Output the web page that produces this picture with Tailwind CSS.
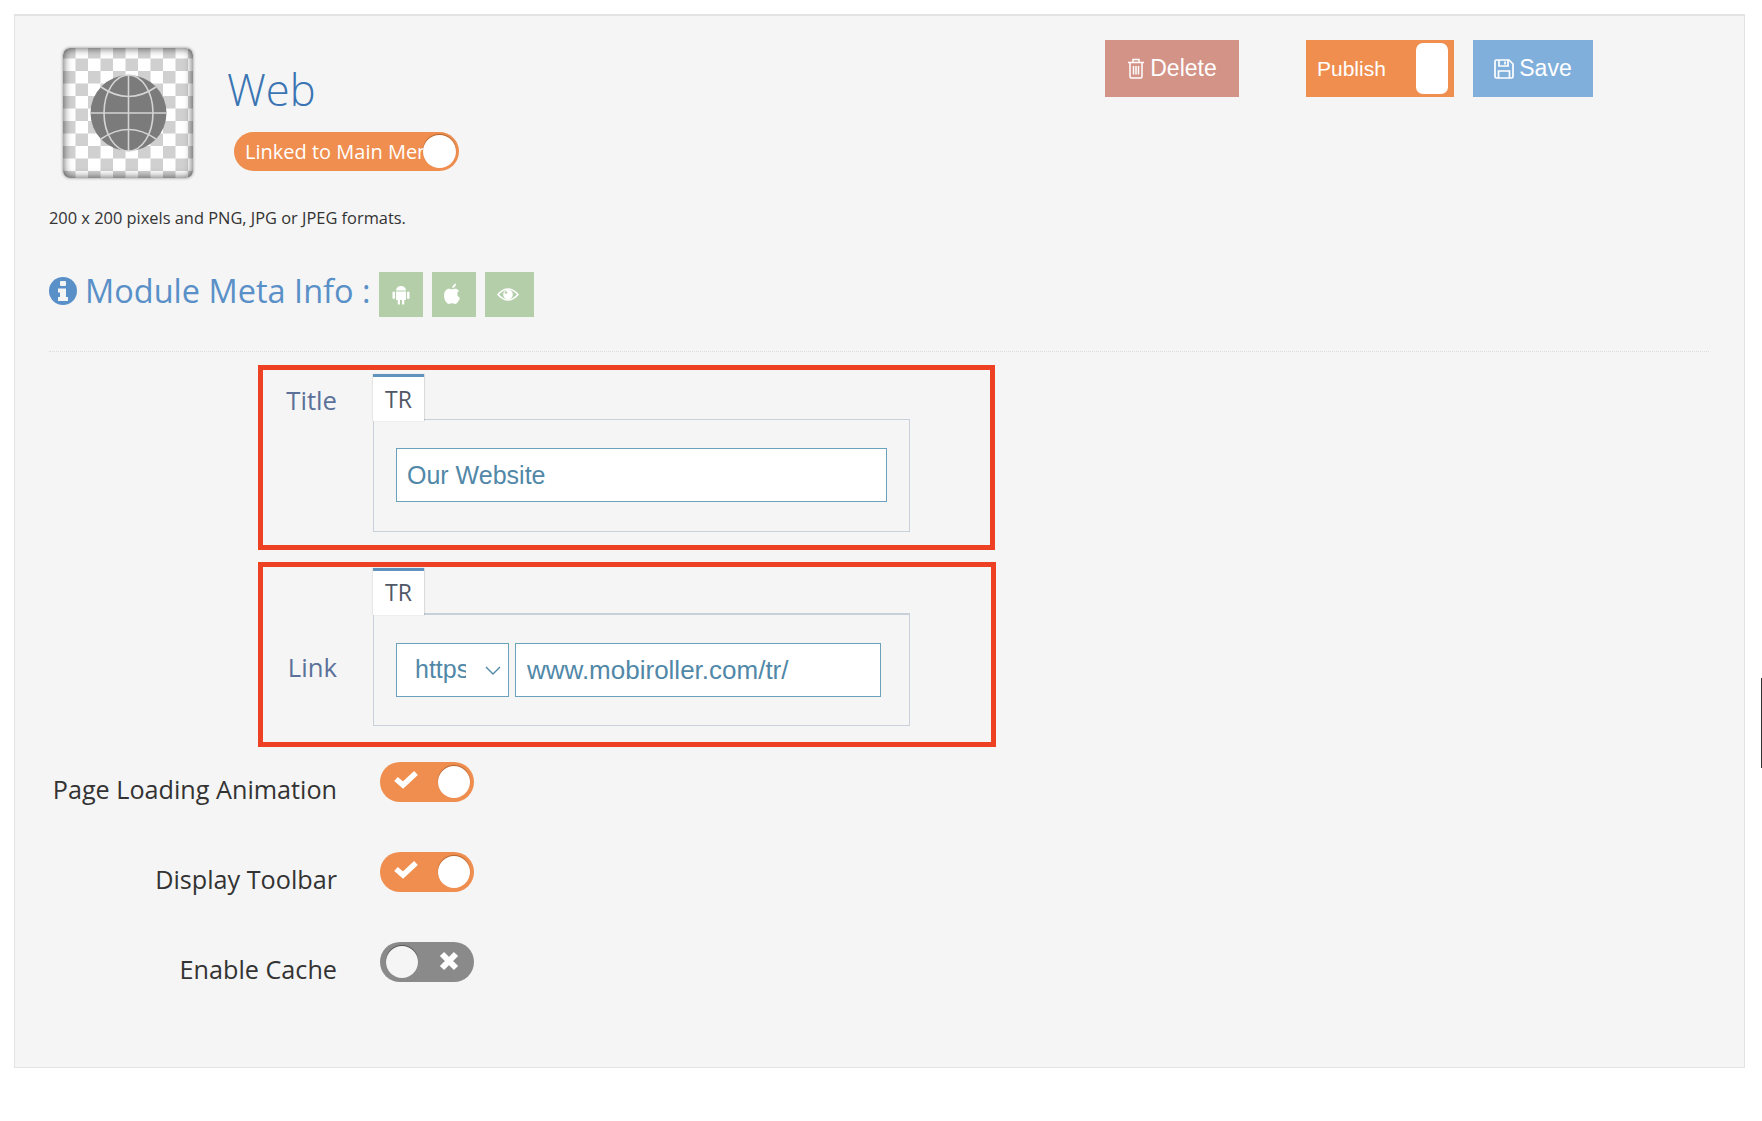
<!DOCTYPE html>
<html lang="en">
<head>
    <meta charset="UTF-8">
    <meta name="viewport" content="width=device-width, initial-scale=1.0">
    <title>Web module</title>
    <script src="https://cdn.jsdelivr.net/npm/@tailwindcss/browser@4"></script>
</head>
<body class="relative bg-white h-[1121px] overflow-hidden font-['Open_Sans',sans-serif]">
    <div class="absolute left-[1761px] top-[678px] w-px h-[90px] bg-[#333333]"></div>

    <div class="ml-[14px] mt-[14px] w-[1731px] h-[1054px] border border-t-2 border-[#e3e3e3] bg-[#f5f5f5] pt-[32px]">

        <!-- header -->
        <div class="flex items-start h-[132px]">
            <div class="ml-[48px] w-[130px] h-[130px] relative rounded-[7px] overflow-hidden shrink-0 shadow-[0_0_3px_rgba(0,0,0,0.45)]">
                <svg width="130" height="130" viewBox="0 0 130 130">
                    <defs>
                        <pattern id="checker" width="25" height="25" patternUnits="userSpaceOnUse" x="0" y="-2">
                            <rect width="25" height="25" fill="#ffffff"/>
                            <rect width="12.5" height="12.5" fill="#d0d0d0"/>
                            <rect x="12.5" y="12.5" width="12.5" height="12.5" fill="#d0d0d0"/>
                        </pattern>
                    </defs>
                    <rect width="130" height="130" fill="url(#checker)"/>
                    <circle cx="65.5" cy="65" r="38" fill="#7b7b7b"/>
                    <g fill="none" stroke="#d4d4d4" stroke-width="1.6">
                        <ellipse cx="65.5" cy="65" rx="24.5" ry="38"/>
                        <path d="M65.5 27V103M27.5 65H103.5"/>
                        <path d="M38 39Q65.5 58 93 39M38 91Q65.5 72 93 91"/>
                    </g>
                </svg>
                <div class="absolute inset-0 rounded-[7px] shadow-[inset_0_0_9px_rgba(0,0,0,0.7)]"></div>
            </div>

            <div class="ml-[35px] w-[240px] shrink-0 relative">
                <div class="-ml-px text-[43.500px] leading-[61px] font-light text-[#3a74b3] mt-[11px]">Web</div>
                <div class="ml-[6px] mt-[12px] w-[225px] h-[39px] rounded-full bg-[#ef8e4e] relative overflow-hidden flex items-center pl-[11px]">
                    <span class="text-[20px] text-white whitespace-nowrap">Linked to Main Menu</span>
                    <span class="absolute right-[3px] top-[3px] w-[33px] h-[33px] rounded-full bg-white shadow-[0_-1px_1px_rgba(120,60,20,0.5)]"></span>
                </div>
            </div>

            <div class="ml-[637px] -mt-[8px] flex items-start font-['Liberation_Sans',sans-serif] text-white">
                <button class="w-[134px] h-[57px] bg-[#d39387] flex items-center justify-center gap-[5px] text-[23px]">
                    <svg width="18" height="21" viewBox="0 0 18 21" fill="none" stroke="#ffffff" stroke-width="1.5">
                        <path d="M1 4.500H17M6 4.500V1.500H12V4.500M3 4.500V18.500Q3 20 4.500 20H13.500Q15 20 15 18.500V4.500M6.500 8V16.500M9 8V16.500M11.500 8V16.500"/>
                    </svg>
                    Delete
                </button>
                <div class="ml-[67px] w-[148px] h-[57px] bg-[#ef8e4e] relative flex items-center pl-[11px] text-[21px]">
                    Publish
                    <span class="absolute right-[6px] top-[3px] w-[32px] h-[51px] rounded-[7px] bg-white"></span>
                </div>
                <button class="ml-[19px] w-[120px] h-[57px] bg-[#80afdb] flex items-center justify-center gap-[5px] text-[23px]">
                    <svg width="20" height="20" viewBox="0 0 20 20" fill="none" stroke="#ffffff" stroke-width="1.7">
                        <path d="M1 2.500Q1 1 2.500 1H15L19 5V17.500Q19 19 17.500 19H2.500Q1 19 1 17.500Z"/>
                        <path d="M5 1V7H14V1M11 2.500V5.500M4.500 19V12H15.500V19"/>
                    </svg>
                    Save
                </button>
            </div>
        </div>

        <p class="ml-[34px] mt-[26px] text-[16.400px] leading-[23px] text-[#333333]">200 x 200 pixels and PNG, JPG or JPEG formats.</p>

        <!-- module meta heading -->
        <div class="ml-[34px] mt-[40px] flex items-start">
            <svg class="mt-[8px]" width="28" height="28" viewBox="0 0 28 28">
                <circle cx="14" cy="14" r="14" fill="#5a90c8"/>
                <rect x="11" y="4" width="6" height="5" rx="1" fill="#f5f5f5"/>
                <path d="M9 11.500H17V20H19V24H9V20H11V15.500H9Z" fill="#f5f5f5"/>
            </svg>
            <h2 class="ml-[8px] text-[32.500px] leading-[44px] text-[#5a90c8]">Module Meta Info :</h2>
            <div class="ml-[8px] mt-[3px] flex gap-[9px]">
                <span class="w-[44px] h-[45px] bg-[#b4ceaa] flex items-center justify-center">
                    <svg width="18" height="21" viewBox="0 0 18 21" fill="#ffffff">
                        <path d="M4 6.500Q4.500 2 9 2T14 6.500Z"/>
                        <path d="M4 7.500H14V16H12.300V19.800A1.200 1.200 0 0 1 10 19.800V16H8V19.800A1.200 1.200 0 0 1 5.700 19.800V16H4Z"/>
                        <rect x="0.500" y="7.500" width="2.500" height="7.500" rx="1.250"/>
                        <rect x="15" y="7.500" width="2.500" height="7.500" rx="1.250"/>
                    </svg>
                </span>
                <span class="w-[44px] h-[45px] bg-[#b4ceaa] flex items-center justify-center">
                    <svg class="-ml-[3px] -mt-[2px]" width="18" height="22" viewBox="0 0 18 22" fill="#ffffff">
                        <path d="M13 0.500Q13.200 4 9.200 5.300Q9 2 13 0.500Z"/>
                        <path d="M9 6.500C11 5.300 14 5 16 7.800C13.500 9.500 13.800 13.500 17 14.800C16 18 14 21 12 21C10.800 21 10 20.300 9 20.300C8 20.300 7 21 6 21C3.500 21 1 16.500 1 12.500C1 8 4 5.500 6.500 5.800C7.500 5.900 8.300 6.500 9 6.500Z"/>
                    </svg>
                </span>
                <span class="w-[49px] h-[45px] bg-[#b4ceaa] flex items-center justify-center pr-[2px]">
                    <svg width="22" height="15" viewBox="0 0 22 15">
                        <path d="M1 7.500Q11 -3.500 21 7.500Q11 18.500 1 7.500Z" fill="none" stroke="#ffffff" stroke-width="1.600"/>
                        <circle cx="11" cy="7.500" r="4.800" fill="#ffffff"/>
                        <circle cx="9" cy="5.500" r="1.300" fill="#b4ceaa"/>
                    </svg>
                </span>
            </div>
        </div>

        <div class="ml-[34px] mt-[34px] w-[1660px] border-t border-dotted border-[#dddddd]"></div>

        <!-- title -->
        <div class="ml-[243px] mt-[13px] w-[737px] h-[185px] border-[5px] border-[#ee4023] flex">
            <label class="w-[74px] shrink-0 text-right text-[25.700px] leading-[33px] text-[#5b7199] mt-[14px]">Title</label>
            <div class="ml-[36px] w-[537px] pt-[4px]">
                <div class="w-[51px] h-[47px] bg-white border-t-[3px] border-[#5f92bd] text-[23px] leading-[44px] text-center text-[#4f5866] relative z-10 shadow-[-1px_0_1px_rgba(0,0,0,0.06),1px_0_1px_rgba(0,0,0,0.1)]">TR</div>
                <div class="-mt-[2px] h-[113px] border border-[#c8d1da] pt-[28px] pl-[22px]">
                    <input type="text" value="Our Website" class="w-[491px] h-[54px] bg-white border border-[#6ba2bb] pl-[10px] font-['Liberation_Sans',sans-serif] text-[25px] text-[#5188a8] outline-none">
                </div>
            </div>
        </div>

        <!-- link -->
        <div class="ml-[243px] mt-[12px] w-[738px] h-[185px] border-[5px] border-[#ee4023] flex">
            <label class="w-[74px] shrink-0 text-right text-[25.700px] leading-[33px] text-[#5b7199] mt-[84px]">Link</label>
            <div class="ml-[36px] w-[537px] pt-[1px]">
                <div class="w-[51px] h-[47px] bg-white border-t-[3px] border-[#5f92bd] text-[23px] leading-[43px] text-center text-[#4f5866] relative z-10 shadow-[-1px_0_1px_rgba(0,0,0,0.06),1px_0_1px_rgba(0,0,0,0.1)]">TR</div>
                <div class="-mt-[2px] h-[113px] border border-t-2 border-[#c8d1da] pt-[28px] pl-[22px] flex">
                    <div class="relative w-[113px] h-[54px]">
                        <select class="appearance-none w-full h-full bg-white border border-[#6ba2bb] pl-[18px] pr-[42px] font-['Liberation_Sans',sans-serif] text-[25px] text-[#5188a8] outline-none rounded-none">
                            <option>https://</option>
                        </select>
                        <svg class="absolute right-[7px] top-[22px] pointer-events-none" width="18" height="11" viewBox="0 0 18 11" fill="none" stroke="#5188a8" stroke-width="1.400">
                            <path d="M2 2L9 9L16 2"/>
                        </svg>
                    </div>
                    <input type="text" value="www.mobiroller.com/tr/" class="ml-[6px] w-[366px] h-[54px] bg-white border border-[#6ba2bb] pl-[11px] font-['Liberation_Sans',sans-serif] text-[26px] text-[#5188a8] outline-none">
                </div>
            </div>
        </div>

        <!-- switches -->
        <div class="mt-[15px] flex flex-col gap-[50px]">
            <div class="flex h-[40px]">
                <span class="w-[322px] text-right text-[25.200px] leading-[34px] text-[#333333] mt-[10px] whitespace-nowrap">Page Loading Animation</span>
                <div class="ml-[43px] w-[94px] h-[40px] rounded-full bg-[#ef8e4e] relative">
                    <svg class="absolute left-[13px] top-[7px]" width="26" height="20" viewBox="0 0 26 20">
                        <path d="M3 10L10 16L23 4" fill="none" stroke="#ffffff" stroke-width="5.500"/>
                    </svg>
                    <span class="absolute right-[4px] top-[4px] w-[32px] h-[32px] rounded-full bg-white shadow-[0_-1px_1px_rgba(120,60,20,0.5)]"></span>
                </div>
            </div>
            <div class="flex h-[40px]">
                <span class="w-[322px] text-right text-[25.200px] leading-[34px] text-[#333333] mt-[10px] whitespace-nowrap">Display Toolbar</span>
                <div class="ml-[43px] w-[94px] h-[40px] rounded-full bg-[#ef8e4e] relative">
                    <svg class="absolute left-[13px] top-[7px]" width="26" height="20" viewBox="0 0 26 20">
                        <path d="M3 10L10 16L23 4" fill="none" stroke="#ffffff" stroke-width="5.500"/>
                    </svg>
                    <span class="absolute right-[4px] top-[4px] w-[32px] h-[32px] rounded-full bg-white shadow-[0_-1px_1px_rgba(120,60,20,0.5)]"></span>
                </div>
            </div>
            <div class="flex h-[40px]">
                <span class="w-[322px] text-right text-[25.200px] leading-[34px] text-[#333333] mt-[10px] whitespace-nowrap">Enable Cache</span>
                <div class="ml-[43px] w-[94px] h-[40px] rounded-full bg-[#8a8a8a] relative">
                    <span class="absolute left-[6px] top-[4px] w-[32px] h-[32px] rounded-full bg-[#f5f5f5] shadow-[0_-1px_1px_rgba(0,0,0,0.4)]"></span>
                    <svg class="absolute left-[58px] top-[8px]" width="22" height="22" viewBox="0 0 22 22">
                        <path d="M4 4L18 18M18 4L4 18" fill="none" stroke="#ffffff" stroke-width="6"/>
                    </svg>
                </div>
            </div>
        </div>
    </div>
</body>
</html>
